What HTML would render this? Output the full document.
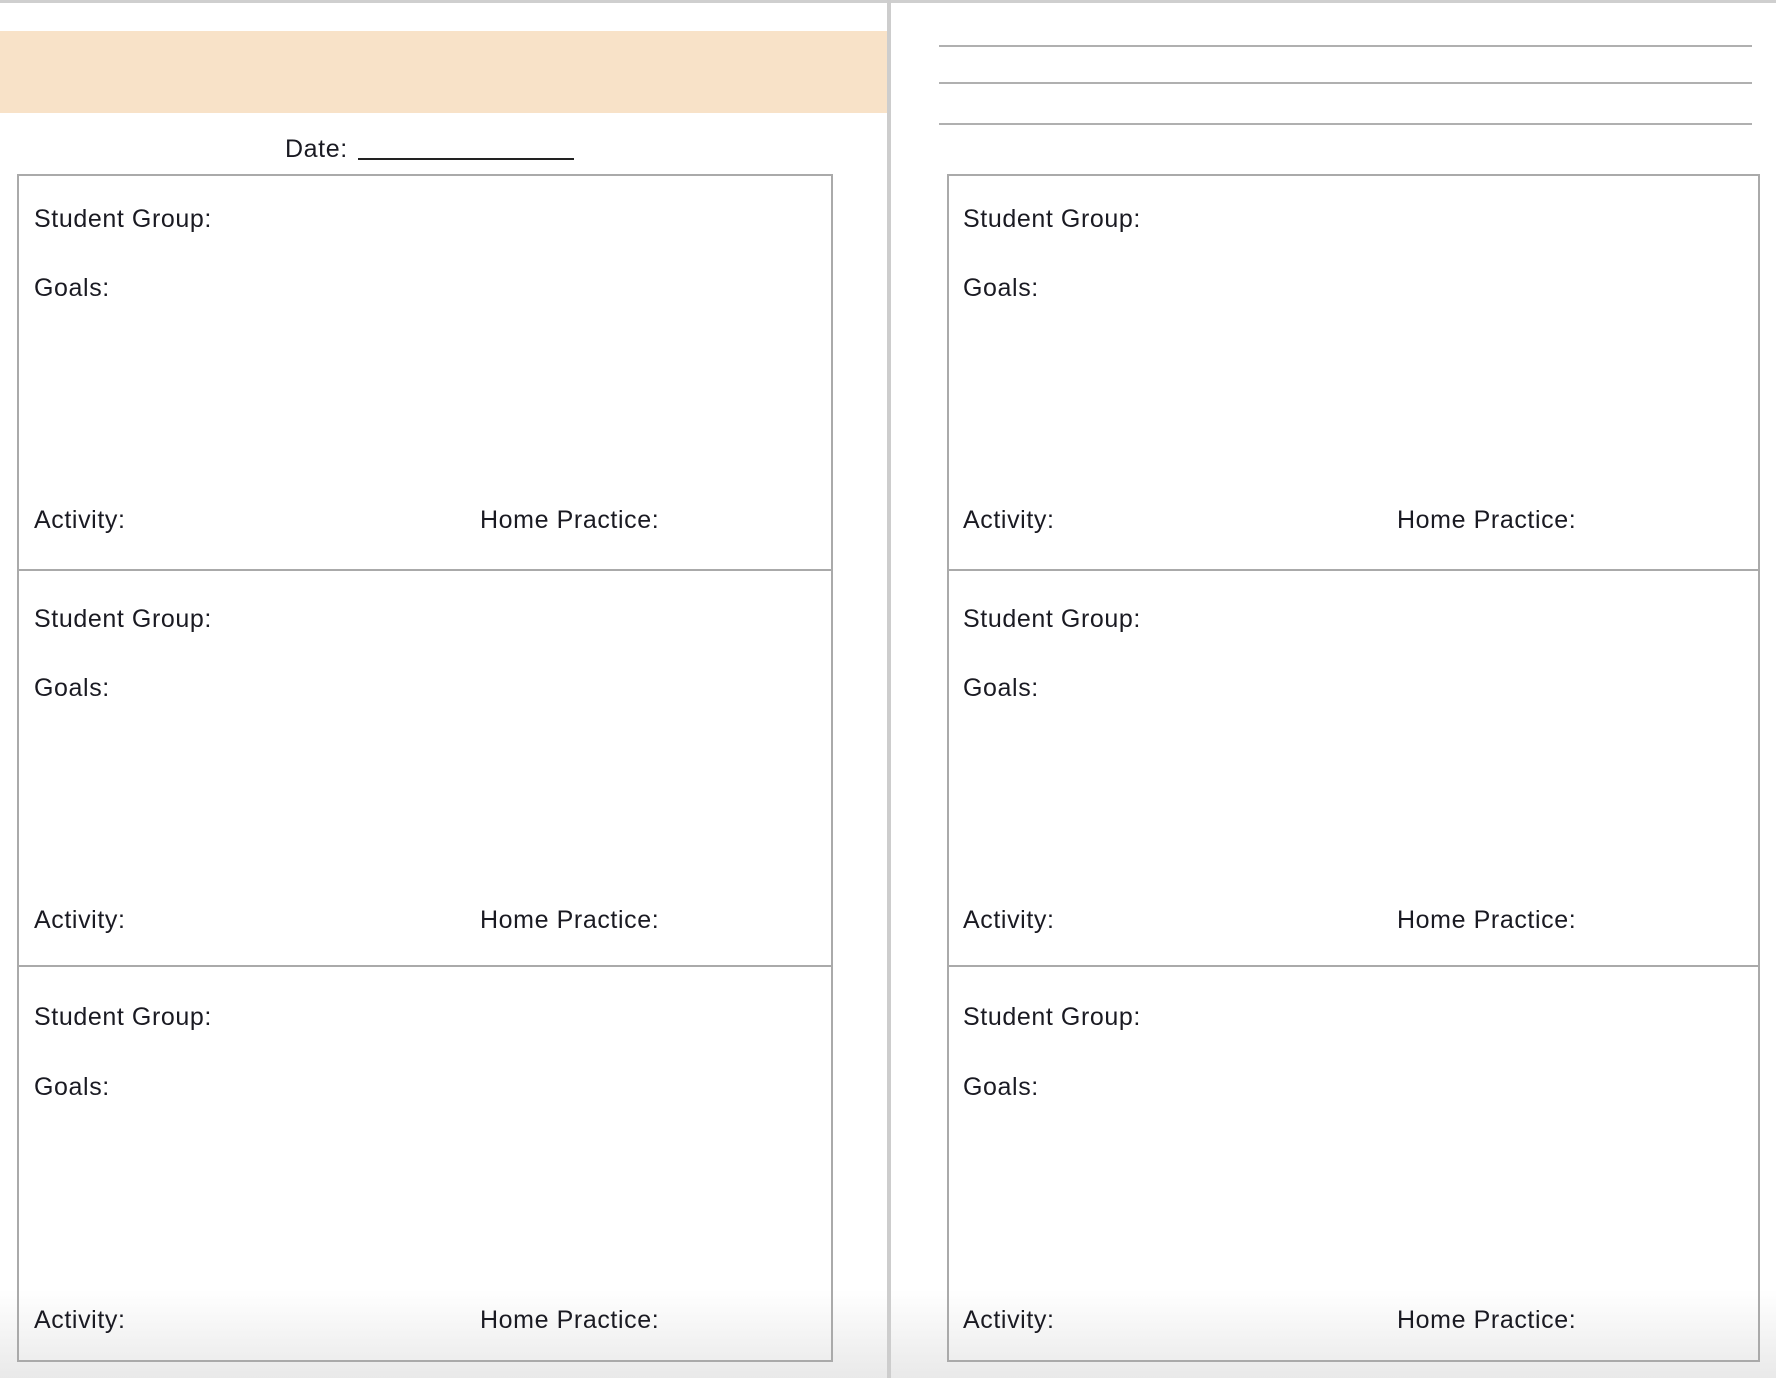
<!DOCTYPE html>
<html><head><meta charset="utf-8"><style>
html,body{margin:0;padding:0}
body{width:1776px;height:1378px;position:relative;overflow:hidden;background:linear-gradient(#fff 0,#fff 1290px,#e9e9e9 1378px);font-family:"Liberation Sans",sans-serif;color:#1a1a22}
.a{position:absolute}
.t{position:absolute;font-size:25px;line-height:25px;letter-spacing:0.6px;white-space:nowrap}
.box{position:absolute;border:2px solid #aaa;box-sizing:border-box}
.hl{position:absolute;height:2px;background:#b0b0b0}
</style></head><body>
<div class="a" style="left:0;top:0;width:1776px;height:3px;background:#cfcfcf"></div>
<div class="a" style="left:0;top:31px;width:887px;height:82px;background:#f8e2c8"></div>
<div class="a" style="left:887px;top:0;width:4px;height:1378px;background:#cdcdcd"></div>
<div class="t" style="left:285px;top:137px">Date:</div>
<div class="a" style="left:358px;top:158px;width:216px;height:2px;background:#222"></div>
<div class="hl" style="left:939px;top:45px;width:813px"></div>
<div class="hl" style="left:939px;top:82px;width:813px"></div>
<div class="hl" style="left:939px;top:123px;width:813px"></div>

<div class="box" style="left:17px;top:174px;width:816px;height:1188px"></div>
<div class="hl" style="left:17px;top:569px;width:816px;background:#aaa"></div>
<div class="hl" style="left:17px;top:965px;width:816px;background:#aaa"></div>
<div class="box" style="left:947px;top:174px;width:813px;height:1188px"></div>
<div class="hl" style="left:947px;top:569px;width:813px;background:#aaa"></div>
<div class="hl" style="left:947px;top:965px;width:813px;background:#aaa"></div>

<!-- left -->
<div class="t" style="left:34px;top:207px">Student Group:</div>
<div class="t" style="left:34px;top:276px">Goals:</div>
<div class="t" style="left:34px;top:508px">Activity:</div>
<div class="t" style="left:480px;top:508px">Home Practice:</div>
<div class="t" style="left:34px;top:607px">Student Group:</div>
<div class="t" style="left:34px;top:676px">Goals:</div>
<div class="t" style="left:34px;top:908px">Activity:</div>
<div class="t" style="left:480px;top:908px">Home Practice:</div>
<div class="t" style="left:34px;top:1005px">Student Group:</div>
<div class="t" style="left:34px;top:1075px">Goals:</div>
<div class="t" style="left:34px;top:1308px">Activity:</div>
<div class="t" style="left:480px;top:1308px">Home Practice:</div>
<!-- right -->
<div class="t" style="left:963px;top:207px">Student Group:</div>
<div class="t" style="left:963px;top:276px">Goals:</div>
<div class="t" style="left:963px;top:508px">Activity:</div>
<div class="t" style="left:1397px;top:508px">Home Practice:</div>
<div class="t" style="left:963px;top:607px">Student Group:</div>
<div class="t" style="left:963px;top:676px">Goals:</div>
<div class="t" style="left:963px;top:908px">Activity:</div>
<div class="t" style="left:1397px;top:908px">Home Practice:</div>
<div class="t" style="left:963px;top:1005px">Student Group:</div>
<div class="t" style="left:963px;top:1075px">Goals:</div>
<div class="t" style="left:963px;top:1308px">Activity:</div>
<div class="t" style="left:1397px;top:1308px">Home Practice:</div>
</body></html>
